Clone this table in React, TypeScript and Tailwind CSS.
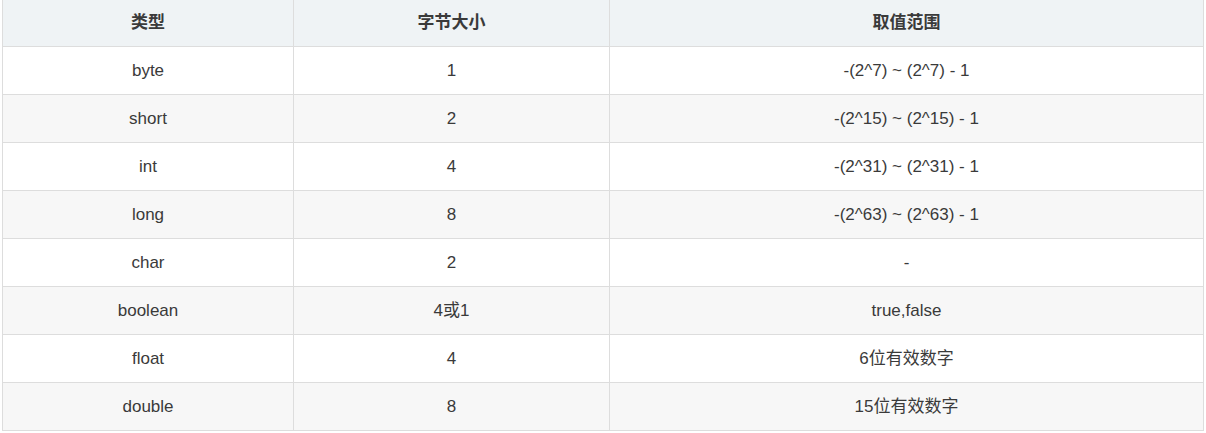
import React from "react";

const rows: [string, string, string][] = [
  ["byte", "1", "-(2^7) ~ (2^7) - 1"],
  ["short", "2", "-(2^15) ~ (2^15) - 1"],
  ["int", "4", "-(2^31) ~ (2^31) - 1"],
  ["long", "8", "-(2^63) ~ (2^63) - 1"],
  ["char", "2", "-"],
  ["boolean", "4或1", "true,false"],
  ["float", "4", "6位有效数字"],
  ["double", "8", "15位有效数字"],
];

export default function App() {
  return (
    <div
      className="w-[1206px] h-[433px] bg-white text-[17px] text-[#3a3a3a]"
      style={{ fontFamily: '"Liberation Sans", "Noto Sans CJK SC", sans-serif' }}
    >
      <div className="ml-[2px] w-[1202px] border-l border-r border-[#dddddd]">
        <div className="flex h-[47px] border-b border-[#dddddd] bg-[#eff3f5] font-bold">
          <div className="w-[291px] border-r border-[#dddddd] flex items-center justify-center">类型</div>
          <div className="w-[316px] border-r border-[#dddddd] flex items-center justify-center">字节大小</div>
          <div className="flex-1 flex items-center justify-center">取值范围</div>
        </div>
        {rows.map((r, i) => (
          <div
            key={i}
            className={`flex h-[48px] border-b border-[#dddddd] ${i % 2 === 1 ? "bg-[#f7f7f7]" : "bg-white"}`}
          >
            <div className="w-[291px] border-r border-[#dddddd] flex items-center justify-center">{r[0]}</div>
            <div className="w-[316px] border-r border-[#dddddd] flex items-center justify-center">{r[1]}</div>
            <div className="flex-1 flex items-center justify-center">{r[2]}</div>
          </div>
        ))}
      </div>
    </div>
  );
}
